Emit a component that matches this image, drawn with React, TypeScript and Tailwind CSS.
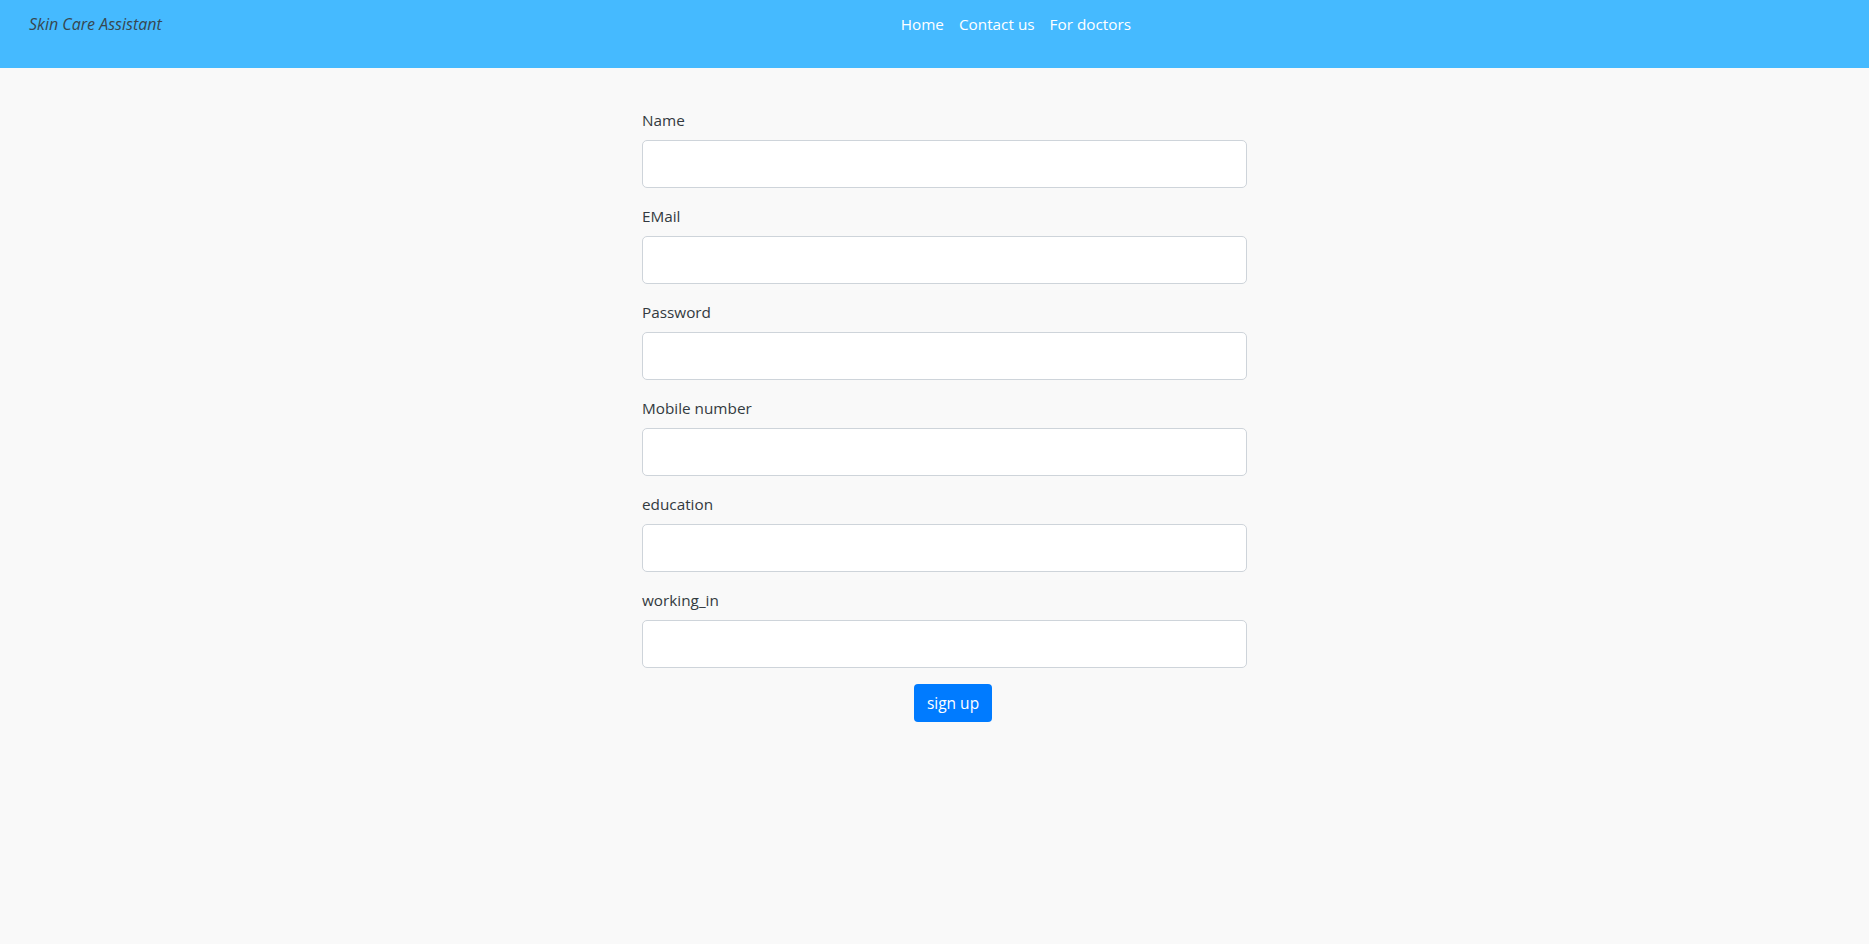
import React from "react";

const fields = ["Name", "EMail", "Password", "Mobile number", "education", "working_in"];

export default function App() {
  return (
    <div className="min-h-[944px] bg-[#f9f9f9] font-['Open_Sans',sans-serif]">
      <nav className="h-[68px] bg-[#45baff] flex items-start pt-[11px] pl-[29px]">
        <span className="italic text-[16px] leading-[26px] text-[#37474f]">Skin Care Assistant</span>
        <div className="ml-[739px] flex gap-[15px] text-[15.3px] leading-[26px] text-white">
          <span>Home</span>
          <span>Contact us</span>
          <span>For doctors</span>
        </div>
      </nav>
      <form className="pt-[40px] pl-[642px] w-[1247px]">
        {fields.map((f) => (
          <div key={f} className="mb-[16px]">
            <label className="block text-[15.3px] leading-[24px] mb-[8px] text-[#333a40]">{f}</label>
            <input className="block w-[605px] h-[48px] bg-white border border-[#ced4da] rounded-[5px]" />
          </div>
        ))}
        <div className="flex justify-center pl-[17px]">
          <button type="button" className="h-[38px] w-[78px] rounded-[4px] bg-[#007bff] text-white text-[15.5px] leading-[24px]">
            sign up
          </button>
        </div>
      </form>
    </div>
  );
}
